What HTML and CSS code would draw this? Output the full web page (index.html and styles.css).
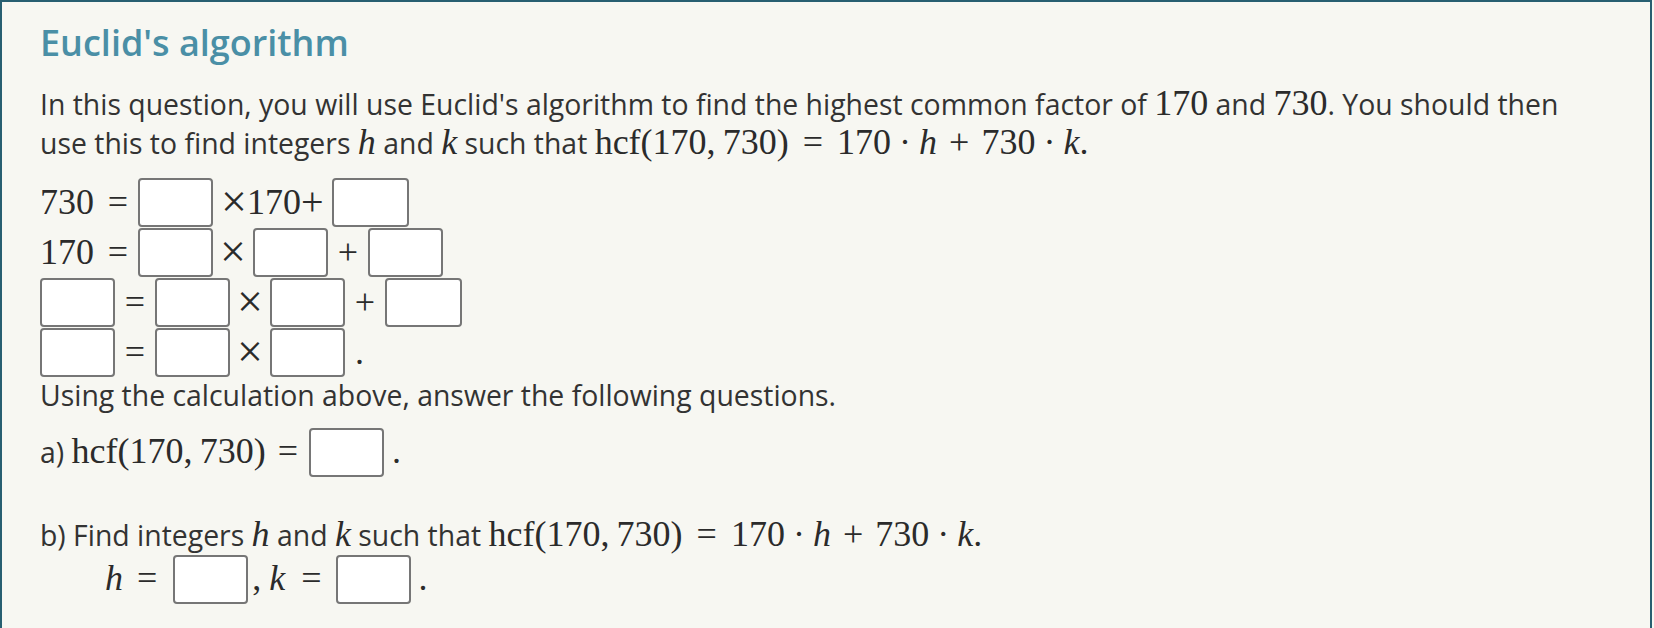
FILE: index.html
```html
<!DOCTYPE html>
<html lang="en">
<head>
<meta charset="utf-8">
<title>Euclid's algorithm</title>
<link rel="stylesheet" href="styles.css">
</head>
<body>
<div class="question">
  <h2 class="title">Euclid's algorithm</h2>
  <p class="text intro">In this question, you will use Euclid's algorithm to find the highest common factor of <span class="m">170</span> and <span class="m">730</span>. You should then use this to find integers <span class="m"><i>h</i></span> and <span class="m"><i>k</i></span> such that <span class="m">hcf(170,&#8201;730)<span class="rel">=</span>170<span class="dot">&#183;</span><i>h</i><span class="plus">+</span>730<span class="dot">&#183;</span><i>k</i>.</span></p>

  <div class="steps">
    <div class="row">
      <span class="lead"><span>730</span><span>=</span></span>
      <span class="box"></span>
      <span class="tail"><span class="x">&#215;</span>170<span class="p">+</span></span>
      <span class="box wide"></span>
    </div>
    <div class="row">
      <span class="lead"><span>170</span><span>=</span></span>
      <span class="box"></span>
      <span class="slot x">&#215;</span>
      <span class="box"></span>
      <span class="slot">+</span>
      <span class="box"></span>
    </div>
    <div class="row">
      <span class="box"></span>
      <span class="slot">=</span>
      <span class="box"></span>
      <span class="slot x">&#215;</span>
      <span class="box"></span>
      <span class="slot">+</span>
      <span class="box wide"></span>
    </div>
    <div class="row">
      <span class="box"></span>
      <span class="slot">=</span>
      <span class="box"></span>
      <span class="slot x">&#215;</span>
      <span class="box"></span>
      <span class="slot end">.</span>
    </div>
  </div>

  <p class="text using">Using the calculation above, answer the following questions.</p>

  <p class="text part-a">a) <span class="m">hcf(170,&#8201;730)<span class="rel a-rel">=</span></span><span class="ibox"></span><span class="m stop">.</span></p>

  <p class="text part-b">b) Find integers <span class="m"><i>h</i></span> and <span class="m"><i>k</i></span> such that <span class="m">hcf(170,&#8201;730)<span class="rel">=</span>170<span class="dot">&#183;</span><i>h</i><span class="plus">+</span>730<span class="dot">&#183;</span><i>k</i>.</span></p>

  <p class="text hk"><span class="m"><i>h</i><span class="rel wide-rel">=</span></span><span class="ibox"></span><span class="m comma">,</span><span class="m"><i>k</i><span class="rel k-rel">=</span></span><span class="ibox"></span><span class="m stop">.</span></p>
</div>
</body>
</html>
```

FILE: styles.css
```css
* {
  box-sizing: border-box;
}

body {
  margin: 0;
  background: #f7f7f2;
  font-family: "Open Sans", "Noto Sans", sans-serif;
  color: #333333;
}

.question {
  width: 1652px;
  min-height: 628px;
  border: 2px solid #275f71;
  border-bottom: none;
  background: #f7f7f2;
  padding: 19px 40px 0 38px;
}

.title {
  margin: 0;
  font-size: 36px;
  font-weight: 600;
  line-height: 44px;
  color: #4a8fa6;
}

.text {
  margin: 0;
  font-size: 28.4px;
  line-height: 39px;
}

.intro {
  margin-top: 20px;
}

.m {
  font-family: "Liberation Serif", "Times New Roman", serif;
  font-size: 36px;
  line-height: 36px;
  color: #2b2b2b;
}

.m i {
  font-style: italic;
}

.rel {
  margin: 0 14px;
}

.plus {
  margin: 0 12px;
}

.dot {
  margin: 0 8px;
}

/* equation rows */
.steps {
  margin-top: 14px;
}

.row {
  display: flex;
  align-items: center;
  height: 50px;
}

.box {
  flex: none;
  width: 75px;
  height: 49px;
  border: 2px solid #767676;
  border-radius: 4px;
  background: #ffffff;
}

.box.wide {
  width: 77px;
}

.lead,
.slot,
.tail {
  flex: none;
  display: flex;
  align-items: center;
  font-family: "Liberation Serif", "Times New Roman", serif;
  font-size: 36px;
  line-height: 1;
  color: #2b2b2b;
}

.lead {
  width: 98px;
  justify-content: space-between;
  padding-right: 10px;
}

.slot {
  width: 40px;
  justify-content: center;
}

.slot.end {
  justify-content: flex-start;
  padding-left: 10px;
}

.tail {
  width: 119px;
  padding-left: 8px;
}

.x {
  font-size: 46px;
}

.tail .p {
  font-size: 40px;
}

/* answers */
.using {
  margin-top: -1px;
}

.ibox {
  display: inline-block;
  vertical-align: -14px;
  width: 75px;
  height: 49px;
  border: 2px solid #767676;
  border-radius: 4px;
  background: #ffffff;
}

.stop {
  margin-left: 8px;
}

.part-a {
  margin-top: 13px;
}

.a-rel {
  margin: 0 11px 0 12px;
}

.part-b {
  margin-top: 39px;
}

.hk {
  padding-left: 65px;
}

.wide-rel {
  margin: 0 16px 0 14px;
}

.comma {
  margin: 0 8px 0 4px;
}

.k-rel {
  margin: 0 14px 0 16px;
}
```
